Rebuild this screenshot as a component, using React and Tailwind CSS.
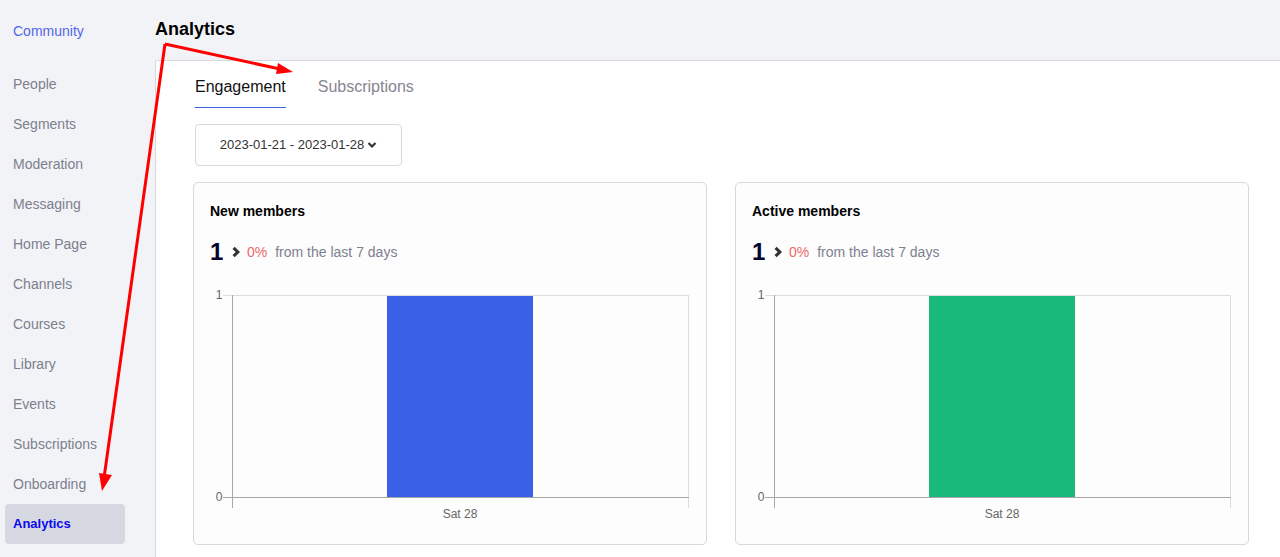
import React from 'react'

const navItems = ['People', 'Segments', 'Moderation', 'Messaging', 'Home Page', 'Channels', 'Courses', 'Library', 'Events', 'Subscriptions', 'Onboarding']

const Chevron = ({ className, d, width = 2.2 }) => (
  <svg className={className} viewBox="0 0 10 10" fill="none" stroke="currentColor" strokeWidth={width}>
    <path d={d} />
  </svg>
)

const ChartCard = ({ title, barClass }) => (
  <div className="w-[514px] h-[363px] bg-[#fdfdfd] border border-[#d8d9e0] rounded-[5px] px-4 pt-[18px]">
    <div className="text-[14px] leading-[20px] font-bold text-black">{title}</div>
    <div className="flex items-center mt-[19px] h-[24px]">
      <span className="text-[24px] font-bold text-[#05052e] w-[20px]">1</span>
      <Chevron className="w-[12px] h-[12px] text-[#333]" d="M3 1.5 L6.5 5 L3 8.5" width={2.6} />
      <span className="text-[14px] text-[#ea6b6b] ml-[5px]">0%</span>
      <span className="text-[14px] text-[#7d8090] ml-[8px]">from the last 7 days</span>
    </div>
    <svg className="block mt-[21px]" width="480" height="240" viewBox="0 0 480 240">
      <rect x="177" y="10" width="146" height="202" className={barClass} />
      <path d="M13 10.5 H479 M478.5 10 V223" stroke="#dddddd" fill="none" />
      <path d="M13 212.5 H479 M22.5 10 V223" stroke="#a8a8a8" fill="none" />
      <text x="12.5" y="14" textAnchor="end" fontSize="12" fill="#666">1</text>
      <text x="12.5" y="216" textAnchor="end" fontSize="12" fill="#666">0</text>
      <text x="250" y="233" textAnchor="middle" fontSize="12" fill="#666">Sat 28</text>
    </svg>
  </div>
)

export default function App() {
  return (
    <div className="relative flex h-[557px] w-[1280px] overflow-hidden bg-[#f2f3f7] font-['Liberation_Sans',Arial,sans-serif]">
      {/* sidebar */}
      <div className="w-[155px] shrink-0 pt-[11px] pl-[5px]">
        <div className="w-[120px] h-10 px-2 flex items-center text-[14px] text-[#5266ea] mb-[13px]">Community</div>
        {navItems.map((item) => (
          <div key={item} className="w-[120px] h-10 px-2 flex items-center text-[14px] text-[#7d7f8e]">{item}</div>
        ))}
        <div className="w-[120px] h-10 px-2 flex items-center text-[13px] font-bold text-[#0a0af0] bg-[#d6d8e1] rounded-[4px]">Analytics</div>
      </div>

      <div className="flex-1 flex flex-col">
        <div className="h-[60px] shrink-0 pt-[17px] text-[18px] leading-[24px] font-bold text-black">Analytics</div>
        <div className="flex-1 bg-white border-t border-l border-[#d8d9e0] pl-[37px]">
          {/* tabs */}
          <div className="flex pl-[2px] h-[47px] gap-8 text-[16px]">
            <div className="flex items-center h-full pt-[5px] border-b border-[#3a5fe5] text-[#111]">Engagement</div>
            <div className="flex items-center h-full pt-1 text-[#85868f]">Subscriptions</div>
          </div>
          <div className="ml-[2px] mt-4 w-[207px] h-[42px] flex items-center justify-center gap-[3px] border border-[#d8d9e0] rounded-[4px] text-[13px] text-[#333]">
            <span>2023-01-21 - 2023-01-28</span>
            <Chevron className="w-[10px] h-[10px] text-[#333]" d="M1.5 3 L5 6.5 L8.5 3" />
          </div>
          <div className="flex gap-[28px] mt-4">
            <ChartCard title="New members" barClass="fill-[#3a60e8]" />
            <ChartCard title="Active members" barClass="fill-[#19b97b]" />
          </div>
        </div>
      </div>

      {/* red annotation arrows */}
      <svg className="absolute inset-0 pointer-events-none" width="1280" height="557" viewBox="0 0 1280 557">
        <path d="M165 44 L280 69 M165 44 L104 478" stroke="#ff0000" strokeWidth="3" fill="none" />
        <polygon points="293,72 276,74 278,63" fill="#ff0000" />
        <polygon points="102,491 99,473 112,475" fill="#ff0000" />
      </svg>
    </div>
  )
}
